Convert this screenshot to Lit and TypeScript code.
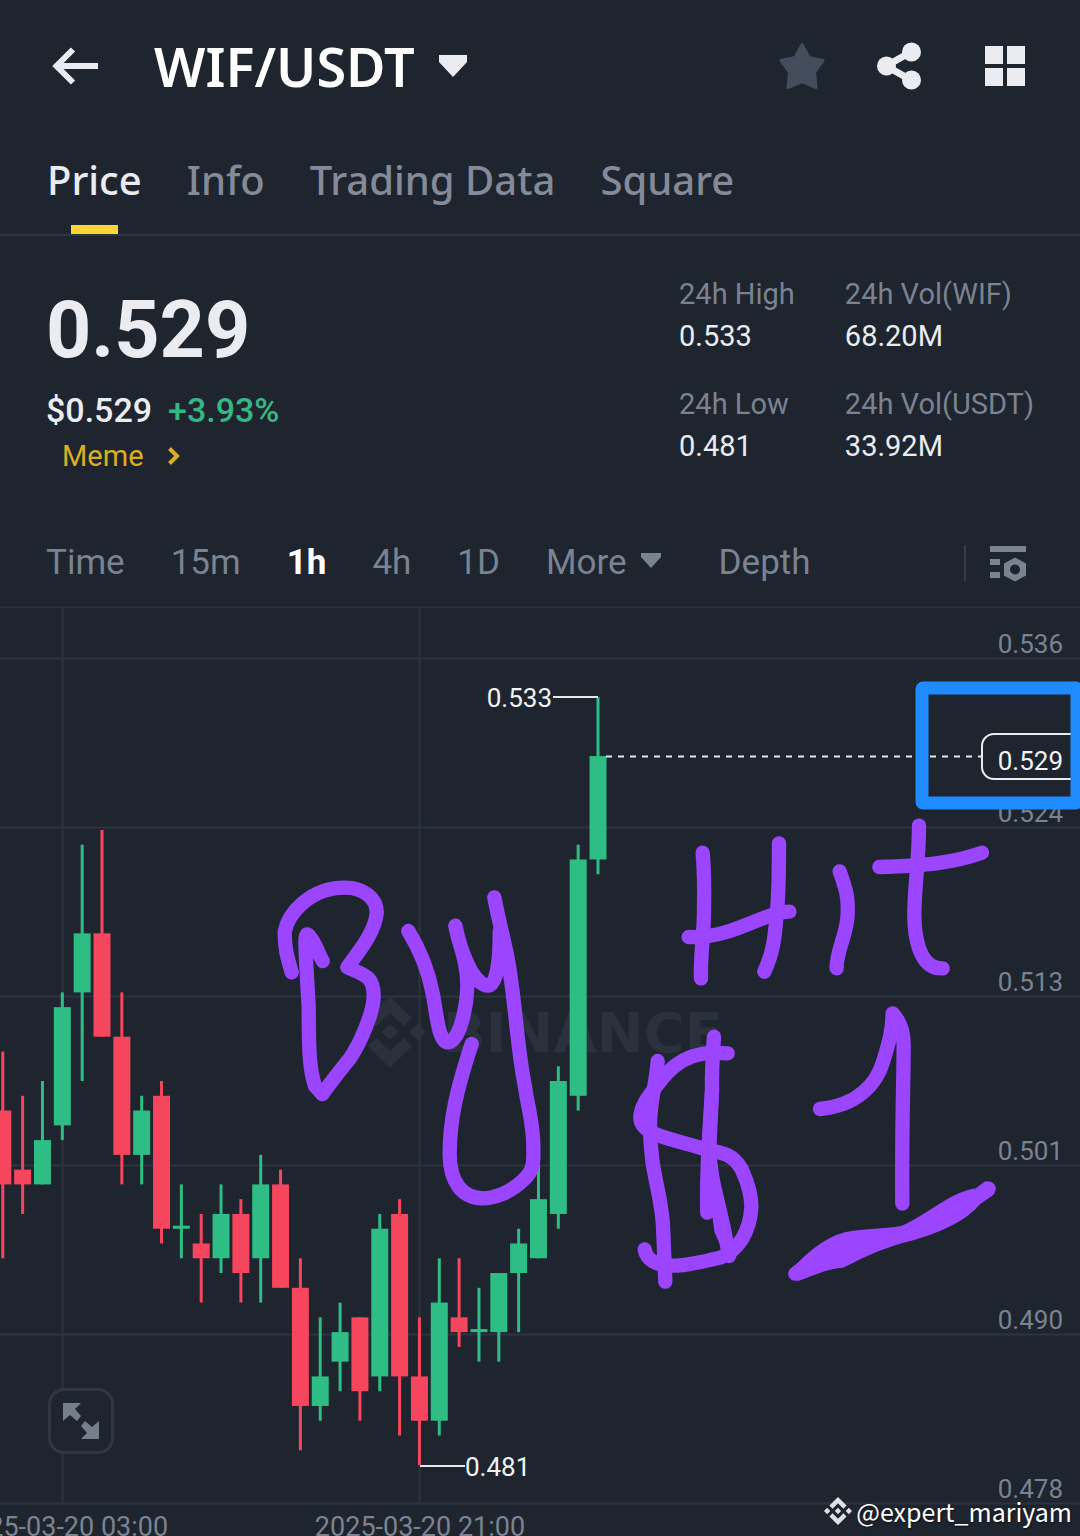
import { LitElement, html, svg, css } from "lit";
import { customElement, property, state } from "lit/decorators.js";

/* open, high, low, close in thousandths of a USDT */
type Candle = [number, number, number, number];

const CANDLES: Candle[] = [
  [505, 509, 495, 500], [501, 506, 498, 500], [500, 507, 500, 503],
  [504, 513, 503, 512], [513, 523, 507, 517], [517, 524, 510, 510],
  [510, 513, 500, 502], [502, 506, 500, 505], [506, 507, 496, 497],
  [497, 500, 495, 497], [496, 498, 492, 495], [495, 500, 494, 498],
  [498, 499, 492, 494], [495, 502, 492, 500], [500, 501, 493, 493],
  [493, 495, 482, 485], [485, 491, 484, 487], [488, 492, 486, 490],
  [491, 491, 484, 486], [487, 498, 486, 497], [498, 499, 483, 487],
  [487, 491, 481, 484], [484, 495, 483, 492], [491, 495, 489, 490],
  [490, 493, 488, 490], [490, 494, 488, 494], [494, 497, 490, 496],
  [495, 503, 495, 499], [498, 508, 497, 507], [506, 523, 505, 522],
  [522, 533, 521, 529],
];

const LEVELS = ["0.536", "0.524", "0.513", "0.501", "0.490", "0.478"];
const TIMES = [
  { x: 62, label: "2025-03-20 03:00" },
  { x: 419, label: "2025-03-20 21:00" },
];

const priceY = (p: number) => 89 + (533 - p) * 14.77;
const candleX = (i: number) => 2.8 + i * 19.84;

const LOGO =
  "M16.624 13.9202l2.7175 2.7154-7.353 7.353-7.353-7.352 2.7175-2.7164 4.6355 4.6595 4.6356-4.6595zm4.6366-4.6366L24 12l-2.7154 2.7164L18.5682 12l2.6924-2.7164zm-9.272.001l2.7163 2.6914-2.7164 2.7174v-.001L9.2721 12l2.7164-2.7154zm-9.2722-.001L5.4088 12l-2.6914 2.6924L0 12l2.7164-2.7164zM11.9885.0115l7.353 7.329-2.7174 2.7154-4.6356-4.6356-4.6355 4.6595-2.7174-2.7154 7.353-7.353z";

const reset = css`
  :host {
    display: block;
    font-family: Roboto, "Liberation Sans", sans-serif;
  }
  button {
    margin: 0;
    padding: 0;
    border: 0;
    background: none;
    color: inherit;
    font: inherit;
    cursor: pointer;
  }
  svg {
    display: block;
  }
`;

@customElement("pair-header")
class PairHeader extends LitElement {
  @property() pair = "";

  static styles = [
    reset,
    css`
      .bar {
        display: flex;
        align-items: center;
        height: 132px;
        padding: 0 55px 0 52px;
        color: #eaecf2;
      }
      .title {
        margin: 0 0 0 56px;
        font: inherit;
      }
      .pair {
        display: flex;
        align-items: center;
        gap: 24px;
        font-family: "Noto Sans", "Open Sans", sans-serif;
        font-size: 54px;
        font-weight: 600;
        line-height: 72px;
        color: #fff;
      }
      .actions {
        display: flex;
        align-items: center;
        gap: 52px;
        margin-left: auto;
      }
      .star {
        color: #444d5b;
      }
      .menu {
        margin-left: 12px;
      }
    `,
  ];

  render() {
    return html`<header class="bar">
      <button aria-label="Back">
        <svg width="46" height="38" viewBox="0 0 46 38" fill="none" stroke="currentColor" stroke-width="6">
          <path d="M46 19H5M21 2.500L4.500 19L21 35.500" />
        </svg>
      </button>
      <h1 class="title">
        <button class="pair">
          ${this.pair}
          <svg width="28" height="22" viewBox="0 0 28 22" fill="#eaecf2"><path d="M0 0H28V7L14 22L0 7Z" /></svg>
        </button>
      </h1>
      <div class="actions">
        <button class="star" aria-label="Favorite">
          <svg width="46" height="48" viewBox="0 0 46 48" fill="currentColor" stroke="currentColor" stroke-width="3" stroke-linejoin="round">
            <path d="M23 2.500L30 15.500L44 18.500L35.500 30L37 45.500L23 39.500L9 45.500L10.500 30L2 18.500L16 15.500Z" />
          </svg>
        </button>
        <button aria-label="Share">
          <svg width="44" height="48" viewBox="0 0 44 48" fill="currentColor">
            <path d="M9 24L34 10M9 24L34 38" stroke="currentColor" stroke-width="7" />
            <circle cx="9.500" cy="24" r="9.500" /><circle cx="34.500" cy="10" r="9.500" /><circle cx="34.500" cy="38" r="9.500" />
          </svg>
        </button>
        <button class="menu" aria-label="Markets">
          <svg width="40" height="40" viewBox="0 0 40 40" fill="currentColor">
            <path d="M0 0H18V18H0ZM22 0H40V18H22ZM0 22H18V40H0ZM22 22H40V40H22Z" />
          </svg>
        </button>
      </div>
    </header>`;
  }
}

@customElement("section-tabs")
class SectionTabs extends LitElement {
  @state() active = "Price";

  static styles = [
    reset,
    css`
      .tabs {
        display: flex;
        gap: 45px;
        padding: 0 47px;
        border-bottom: 2px solid #2f3641;
      }
      .tab {
        position: relative;
        height: 102px;
        padding-bottom: 6px;
        font-family: "Noto Sans", "Open Sans", sans-serif;
        font-size: 40px;
        font-weight: 500;
        line-height: 48px;
        color: #848a98;
      }
      .tab.active {
        color: #eaecf2;
      }
      .tab.active::after {
        content: "";
        position: absolute;
        bottom: 0;
        left: 24px;
        right: 24px;
        height: 9px;
        background: #fcd535;
      }
    `,
  ];

  render() {
    return html`<nav class="tabs">
      ${["Price", "Info", "Trading Data", "Square"].map(
        (t) => html`<button class="tab ${t === this.active ? "active" : ""}" @click=${() => (this.active = t)}>${t}</button>`
      )}
    </nav>`;
  }
}

@customElement("price-summary")
class PriceSummary extends LitElement {
  static styles = [
    reset,
    css`
      .summary {
        display: flex;
        justify-content: space-between;
        padding: 36px 46px 40px;
      }
      .price {
        font-size: 79px;
        font-weight: 700;
        line-height: 116px;
        color: #eaecf2;
      }
      .change {
        display: flex;
        gap: 16px;
        font-size: 34px;
        font-weight: 500;
        line-height: 44px;
        color: #eaecf2;
      }
      .up {
        color: #35b884;
      }
      .tag {
        display: inline-flex;
        align-items: center;
        gap: 24px;
        padding-left: 16px;
        font-size: 29px;
        line-height: 48px;
        color: #dcae22;
        text-decoration: none;
      }
      .stats {
        display: grid;
        grid-template-columns: auto auto;
        column-gap: 50px;
        row-gap: 26px;
        align-content: start;
        margin: 0;
        padding-top: 1px;
        font-size: 29px;
        line-height: 42px;
      }
      .label {
        color: #7b8290;
      }
      .value {
        margin: 0;
        color: #eaecf2;
      }
    `,
  ];

  render() {
    const stats = [
      ["24h High", "0.533"],
      ["24h Vol(WIF)", "68.20M"],
      ["24h Low", "0.481"],
      ["24h Vol(USDT)", "33.92M"],
    ];
    return html`<section class="summary">
      <div>
        <div class="price">0.529</div>
        <div class="change"><span>$0.529</span><span class="up">+3.93%</span></div>
        <a class="tag" href="#meme"
          >Meme
          <svg width="12" height="18" viewBox="0 0 12 18" fill="none" stroke="currentColor" stroke-width="4">
            <path d="M1.500 1.500L9 9L1.500 16.500" />
          </svg>
        </a>
      </div>
      <dl class="stats">
        ${stats.map(([k, v]) => html`<div><dt class="label">${k}</dt><dd class="value">${v}</dd></div>`)}
      </dl>
    </section>`;
  }
}

@customElement("interval-bar")
class IntervalBar extends LitElement {
  @state() active = "1h";

  static styles = [
    reset,
    css`
      .bar {
        display: flex;
        align-items: center;
        gap: 46px;
        height: 86px;
        padding: 0 53px 0 46px;
        border-bottom: 2px solid #292f3a;
        font-size: 35px;
        line-height: 44px;
        color: #7b8290;
      }
      .active {
        font-weight: 700;
        color: #fff;
      }
      .more {
        display: flex;
        align-items: center;
        gap: 14px;
        margin-right: 12px;
      }
      .tools {
        display: flex;
        align-items: center;
        gap: 24px;
        margin-left: auto;
      }
      .rule {
        width: 2px;
        height: 36px;
        background: #353c47;
      }
    `,
  ];

  render() {
    return html`<div class="bar">
      ${["Time", "15m", "1h", "4h", "1D"].map(
        (t) => html`<button class=${t === this.active ? "active" : ""} @click=${() => (this.active = t)}>${t}</button>`
      )}
      <button class="more">
        More
        <svg width="20" height="20" viewBox="0 0 20 20" fill="currentColor"><path d="M0 0H20V4L10 15L0 4Z" /></svg>
      </button>
      <button>Depth</button>
      <div class="tools">
        <span class="rule"></span>
        <button aria-label="Chart settings">
          <svg width="37" height="37" viewBox="0 0 37 37" fill="currentColor">
            <path d="M0 1H36V7H0ZM0 14H10V20H0ZM0 27H10V33H0Z" />
            <path fill-rule="evenodd" d="M25 12.500L36 18.500V30.500L25 36.500L14 30.500V18.500ZM25 19.500A5 5 0 1 0 25 29.500A5 5 0 1 0 25 19.500Z" />
          </svg>
        </button>
      </div>
    </div>`;
  }
}

@customElement("candle-chart")
class CandleChart extends LitElement {
  static styles = [
    reset,
    css`
      .chart {
        position: relative;
        overflow: hidden;
      }
      .plot {
        width: 100%;
        height: auto;
        font-size: 26px;
      }
      .grid {
        stroke: #2d343f;
        stroke-width: 2;
      }
      .axis {
        fill: #7b8290;
      }
      .time {
        font-size: 27px;
      }
      .mark {
        fill: #f2f3f7;
      }
      .guide {
        stroke: #e6e8ee;
        stroke-width: 2;
        fill: none;
      }
      .dashed {
        stroke-dasharray: 6 6;
      }
      .up {
        fill: #2ebd85;
      }
      .down {
        fill: #f6465d;
      }
      .brand {
        fill: #2a313c;
        font-family: "DejaVu Sans", sans-serif;
        font-size: 56px;
        font-weight: 700;
      }
      .pill {
        fill: #1e252f;
        stroke: #eaecf2;
        stroke-width: 2;
      }
      .frame {
        fill: none;
        stroke: #1e8cff;
        stroke-width: 13;
      }
      .ink {
        fill: none;
        stroke: #9b45ff;
        stroke-width: 43;
        stroke-linecap: round;
        stroke-linejoin: round;
      }
      .solid {
        fill: #9b45ff;
        stroke-width: 18;
      }
      .expand {
        position: absolute;
        left: 48px;
        bottom: 82px;
        display: grid;
        place-items: center;
        width: 66px;
        height: 66px;
        border: 3px solid #303742;
        border-radius: 16px;
        background: #1e252f;
        color: #767d8b;
      }
      .author {
        position: absolute;
        right: 8px;
        bottom: 6px;
        display: flex;
        align-items: center;
        gap: 4px;
        font-family: "Noto Sans CJK SC", "Noto Sans", sans-serif;
        font-size: 25px;
        line-height: 38px;
        color: #fff;
        text-shadow: 1px 1px 2px #0008;
      }
    `,
  ];

  private candle(c: Candle, i: number) {
    const [open, high, low, close] = c;
    const x = candleX(i);
    const top = priceY(Math.max(open, close));
    const bottom = priceY(Math.min(open, close));
    const height = Math.max(bottom - top, 3);
    return svg`<g class=${close >= open ? "up" : "down"}>
      <rect x=${x - 1.5} y=${priceY(high)} width="3" height=${priceY(low) - priceY(high)} />
      <rect x=${x - 8.5} y=${bottom - height} width="17" height=${height} />
    </g>`;
  }

  render() {
    return html`<div class="chart">
      <svg class="plot" viewBox="0 0 1080 928">
        <g class="grid">
          ${LEVELS.map((_, i) => svg`<line x1="0" x2="1080" y1=${50.5 + i * 169} y2=${50.5 + i * 169} />`)}
          ${TIMES.map((t) => svg`<line x1=${t.x + 0.5} x2=${t.x + 0.5} y1="0" y2="896" />`)}
        </g>
        <g class="brand">
          <path transform="translate(354 388) scale(3)" d=${LOGO} />
          <text x="443" y="444">BINANCE</text>
        </g>
        ${CANDLES.map((c, i) => this.candle(c, i))}
        <g class="axis">
          ${LEVELS.map((l, i) => svg`<text x="1063" y=${45 + i * 169} text-anchor="end">${l}</text>`)}
          ${TIMES.map((t) => svg`<text class="time" x=${t.x + 1} y="928" text-anchor="middle">${t.label}</text>`)}
        </g>
        <path class="guide" d="M553 89H598M420 858H465" />
        <path class="guide dashed" d="M606 148.500H982" />
        <rect class="pill" x="982" y="126" width="120" height="45" rx="12" />
        <g class="mark">
          <text x="552" y="99" text-anchor="end">0.533</text>
          <text x="465" y="868">0.481</text>
          <text x="1063" y="162" text-anchor="end">0.529</text>
        </g>
        <rect class="frame" x="922" y="80" width="155" height="115" rx="1" stroke-linejoin="round" />
        <g class="ink" transform="translate(260 252) scale(0.33333)">
          <path d="M95 337C85 300 74 275 74 215C85 160 150 83 255 83C310 83 352 115 350 160C345 215 300 270 262 322C310 345 342 345 341 410C340 460 300 550 270 595C240 630 215 665 187 702" />
          <path d="M188 303C175 280 160 235 145 225C132 215 137 260 138 300L146 440C147 560 146 620 165 678L187 702" />
          <path d="M445 213C480 270 505 330 518 400C530 460 535 545 563 547C600 545 620 440 622 380C622 300 598 260 586 197C600 270 640 377 685 377C715 375 720 270 719 215" />
          <path d="M703 112C712 160 722 200 740 280C765 400 770 560 795 680C805 750 820 790 820 860C820 900 825 930 790 960C750 1000 700 1015 668 1015C600 1013 572 960 569 890C568 780 590 690 635 552" />
        </g>
        <g class="ink" transform="translate(600 193) scale(0.33333)">
          <path d="M308 155C312 200 313 280 312 330C312 400 300 470 303 532" />
          <path d="M537 127C537 200 537 280 530 340C525 400 522 450 493 512" />
          <path d="M266 408C350 412 420 380 480 355C520 340 540 332 568 332" />
          <path d="M719 211C740 270 745 290 743 340C742 400 708 450 710 502" />
          <path d="M957 74C957 180 943 260 943 340C943 400 955 505 1028 502" />
          <path d="M838 198C980 194 1060 185 1146 155" />
          <path d="M383 757C300 750 240 765 185 835C150 880 122 910 121 950C122 1000 200 1010 300 1040C370 1055 400 1060 425 1105C450 1160 455 1190 454 1220C450 1290 415 1350 360 1370C300 1385 250 1395 215 1394C170 1395 138 1375 134 1345" />
          <path d="M173 780C170 840 150 900 150 970C150 1130 190 1180 190 1300L196 1442" />
          <path d="M145 900L140 960" />
          <path d="M342 707C338 760 335 800 336 870C332 950 330 1000 328 1040C330 1150 360 1200 387 1365" />
          <path d="M336 870C328 1000 318 1110 322 1235" />
          <path class="solid" d="M330 1040L322 1235L346 1245L352 1290L385 1365L392 1330L345 1150Z" />
          <path d="M660 924C770 915 830 850 850 780C865 730 878 690 878 637C890 650 911 680 911 730C911 850 905 950 907 1208" />
          <path class="solid" d="M586 1405C630 1360 690 1305 760 1298C850 1288 880 1291 905 1284C980 1256 1050 1181 1130 1171L1158 1150L1174 1175L1133 1204C1080 1269 960 1304 900 1319C820 1344 780 1364 728 1391C690 1392 650 1409 596 1430Z" />
          <path d="M586 1418L620 1393M1140 1182L1166 1163" />
        </g>
      </svg>
      <button class="expand" aria-label="Full screen">
        <svg width="36" height="36" viewBox="0 0 36 36" fill="currentColor">
          <path d="M0 0H18L12 6L18 13L14 18L7 12L0 18ZM36 36H18L24 30L18 23L22 18L29 24L36 18Z" />
        </svg>
      </button>
      <div class="author">
        <svg width="28" height="28" viewBox="0 0 24 24" fill="#dfe1e6"><path d=${LOGO} /></svg>
        @expert_mariyam
      </div>
    </div>`;
  }
}

@customElement("app-root")
class AppRoot extends LitElement {
  static styles = css`
    :host {
      display: block;
      background: #1e252f;
    }
  `;

  render() {
    return html`<pair-header pair="WIF/USDT"></pair-header>
      <section-tabs></section-tabs>
      <main>
        <price-summary></price-summary>
        <interval-bar></interval-bar>
        <candle-chart></candle-chart>
      </main>`;
  }
}
